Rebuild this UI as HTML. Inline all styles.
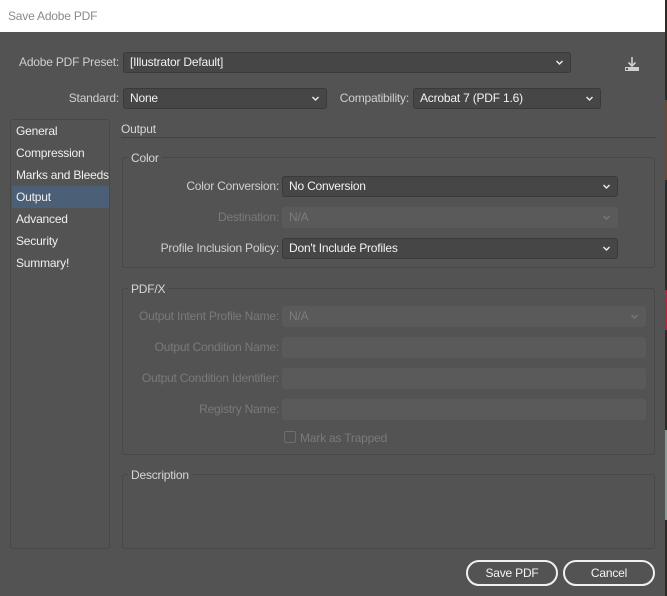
<!DOCTYPE html>
<html><head><meta charset="utf-8"><style>
*{box-sizing:border-box;margin:0;padding:0}
body{width:667px;height:596px;overflow:hidden;background:#535353;font-family:"Liberation Sans",sans-serif;font-size:12px;letter-spacing:-0.2px;color:#e0e0e0;position:relative}
.a{position:absolute}
.title{left:0;top:0;width:665px;height:32px;background:#fff;color:#8a8a8a;padding:9px 0 0 8px;font-size:12px}
.lbl{text-align:right;color:#cfcfcf;height:20px;line-height:21px}
.dis{color:#7a7a7a}
.dd{height:21px;background:#464646;border:1px solid #3a3a3a;border-radius:3px;color:#f2f2f2;padding-left:6px;line-height:19px}
.dd.x{background:#5a5a5a;border-color:#5a5a5a;color:#7d7d7d}
.chev{position:absolute;right:7px;top:6px;width:7px;height:7px}
.grp{border:1px solid #484848;border-radius:3px}
.gl{background:#535353;color:#d6d6d6;padding:0 3px;line-height:14px}
.item{left:16px;color:#f0f0f0;line-height:23px;height:22px}
.btn{height:26px;border:2px solid #f0f0f0;border-radius:13px;text-align:center;line-height:22px;color:#f4f4f4}
</style></head><body>
<div class="a title">Save Adobe PDF</div>
<div class="a" style="left:665px;top:0;width:2px;height:596px;background:#2e2a28"></div>
<div class="a" style="left:665px;top:100px;width:2px;height:80px;background:#6b4a35"></div>
<div class="a" style="left:665px;top:290px;width:2px;height:40px;background:#c01d40"></div>
<div class="a" style="left:665px;top:430px;width:2px;height:90px;background:#8a9a95"></div>

<div class="a lbl" style="left:0;width:119px;top:52px">Adobe PDF Preset:</div>
<div class="a dd" style="left:123px;top:52px;width:448px">[Illustrator Default]<svg class="chev" viewBox="0 0 7 7"><path d="M0.5 2L3.5 5L6.5 2" stroke="#eee" stroke-width="1.4" fill="none"/></svg></div>
<svg class="a" style="left:624px;top:56px" width="16" height="16" viewBox="0 0 16 16"><path d="M8 1V10M4.5 6.5L8 10L11.5 6.5" stroke="#cfcfcf" stroke-width="1.6" fill="none"/><rect x="1" y="11" width="14" height="4" fill="#cfcfcf"/><rect x="2" y="12" width="2" height="2" fill="#555"/></svg>

<div class="a lbl" style="left:0;width:119px;top:88px">Standard:</div>
<div class="a dd" style="left:123px;top:88px;width:204px">None<svg class="chev" viewBox="0 0 7 7"><path d="M0.5 2L3.5 5L6.5 2" stroke="#eee" stroke-width="1.4" fill="none"/></svg></div>
<div class="a lbl" style="left:300px;width:109px;top:88px">Compatibility:</div>
<div class="a dd" style="left:413px;top:88px;width:188px">Acrobat 7 (PDF 1.6)<svg class="chev" viewBox="0 0 7 7"><path d="M0.5 2L3.5 5L6.5 2" stroke="#eee" stroke-width="1.4" fill="none"/></svg></div>

<div class="a grp" style="left:10px;top:119px;width:100px;height:430px"></div>
<div class="a" style="left:12px;top:186px;width:97px;height:22px;background:#4b6076"></div>
<div class="a item" style="top:120px">General</div>
<div class="a item" style="top:142px">Compression</div>
<div class="a item" style="top:164px">Marks and Bleeds</div>
<div class="a item" style="top:186px">Output</div>
<div class="a item" style="top:208px">Advanced</div>
<div class="a item" style="top:230px">Security</div>
<div class="a item" style="top:252px">Summary!</div>

<div class="a" style="left:121px;top:122px;color:#d6d6d6">Output</div>
<div class="a" style="left:121px;top:137px;width:535px;height:1px;background:#444"></div>

<div class="a grp" style="left:122px;top:157px;width:533px;height:111px"></div>
<div class="a gl" style="left:128px;top:151px">Color</div>
<div class="a lbl" style="left:130px;width:149px;top:176px">Color Conversion:</div>
<div class="a dd" style="left:282px;top:176px;width:336px">No Conversion<svg class="chev" viewBox="0 0 7 7"><path d="M0.5 2L3.5 5L6.5 2" stroke="#eee" stroke-width="1.4" fill="none"/></svg></div>
<div class="a lbl dis" style="left:130px;width:149px;top:207px">Destination:</div>
<div class="a dd x" style="left:282px;top:207px;width:336px">N/A<svg class="chev" viewBox="0 0 7 7"><path d="M0.5 2L3.5 5L6.5 2" stroke="#777" stroke-width="1.4" fill="none"/></svg></div>
<div class="a lbl" style="left:130px;width:149px;top:238px">Profile Inclusion Policy:</div>
<div class="a dd" style="left:282px;top:238px;width:336px">Don't Include Profiles<svg class="chev" viewBox="0 0 7 7"><path d="M0.5 2L3.5 5L6.5 2" stroke="#eee" stroke-width="1.4" fill="none"/></svg></div>

<div class="a grp" style="left:122px;top:288px;width:533px;height:167px"></div>
<div class="a gl" style="left:128px;top:282px">PDF/X</div>
<div class="a lbl dis" style="left:124px;width:155px;top:306px">Output Intent Profile Name:</div>
<div class="a dd x" style="left:282px;top:306px;width:364px">N/A<svg class="chev" viewBox="0 0 7 7"><path d="M0.5 2L3.5 5L6.5 2" stroke="#777" stroke-width="1.4" fill="none"/></svg></div>
<div class="a lbl dis" style="left:124px;width:155px;top:337px">Output Condition Name:</div>
<div class="a dd x" style="left:282px;top:337px;width:364px"></div>
<div class="a lbl dis" style="left:124px;width:155px;top:368px">Output Condition Identifier:</div>
<div class="a dd x" style="left:282px;top:368px;width:364px"></div>
<div class="a lbl dis" style="left:124px;width:155px;top:399px">Registry Name:</div>
<div class="a dd x" style="left:282px;top:399px;width:364px"></div>
<div class="a" style="left:284px;top:431px;width:12px;height:12px;border:1px solid #6e6e6e;border-radius:2px"></div>
<div class="a dis" style="left:300px;top:431px">Mark as Trapped</div>

<div class="a grp" style="left:122px;top:474px;width:533px;height:75px"></div>
<div class="a gl" style="left:128px;top:468px">Description</div>

<div class="a btn" style="left:466px;top:560px;width:92px">Save PDF</div>
<div class="a btn" style="left:563px;top:560px;width:92px">Cancel</div>
</body></html>
